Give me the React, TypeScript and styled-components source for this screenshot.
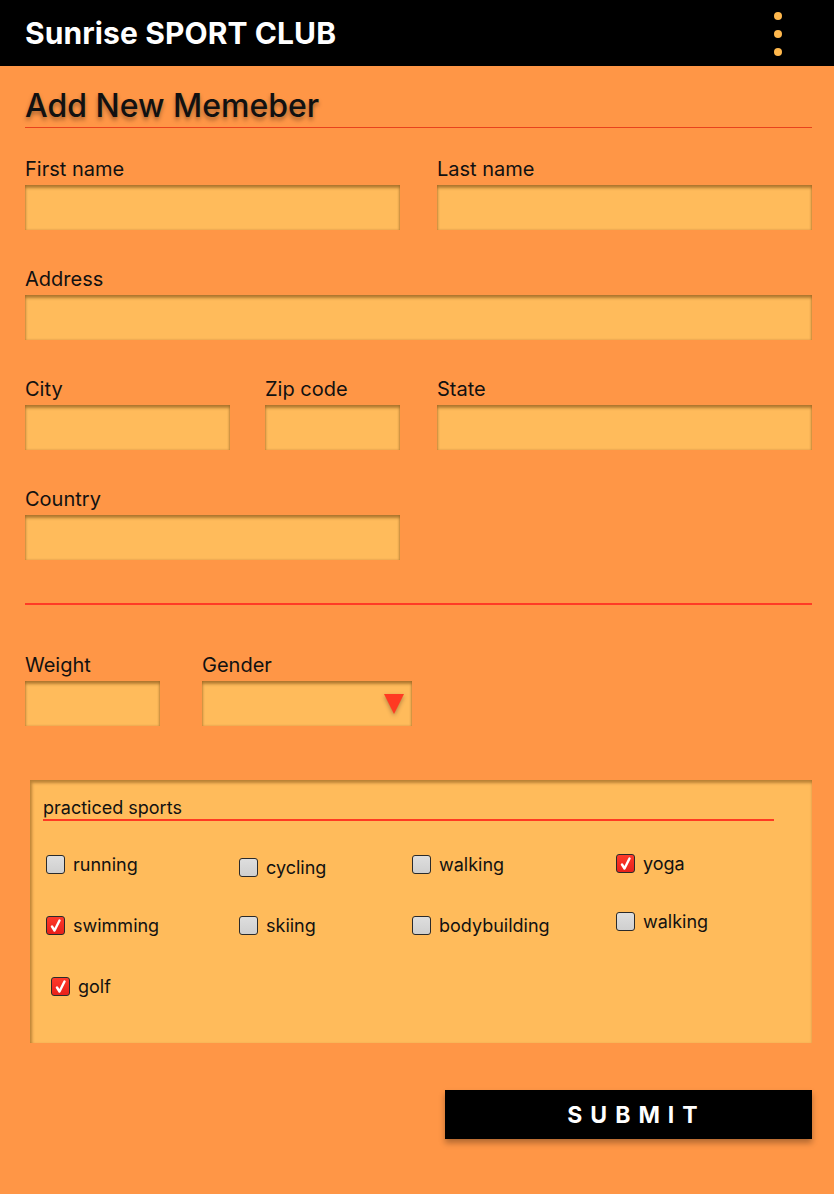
import styled, { createGlobalStyle } from 'styled-components';
import { FC } from 'react';

const GlobalStyle = createGlobalStyle`
  html, body {
    margin: 0;
    padding: 0;
    background: #ff9646;
  }
  body {
    font-family: Inter, 'Noto Sans', sans-serif;
    color: #111;
  }
  * {
    box-sizing: border-box;
  }
`;

const Page = styled.div`
  width: 834px;
  min-height: 1194px;
  background: #ff9646;
`;

const TopBar = styled.header`
  height: 66px;
  background: #000;
  display: flex;
  align-items: center;
  justify-content: space-between;
  padding: 0 52px 0 25px;
`;

const BrandTitle = styled.h1`
  margin: 0;
  color: #fff;
  font-size: 30px;
  font-weight: 700;
  letter-spacing: 0.1px;
`;

const MenuDots = styled.div`
  display: flex;
  flex-direction: column;
  gap: 10px;
  padding-top: 2px;

  span {
    width: 8px;
    height: 8px;
    border-radius: 50%;
    background: #ffb84d;
  }
`;

const Main = styled.main`
  padding: 22px 22px 40px 25px;
`;

const Heading = styled.h2`
  margin: 0 0 29px;
  padding-bottom: 3px;
  font-size: 32px;
  line-height: 36px;
  font-weight: 500;
  color: #111;
  text-shadow: 0 3px 4px rgba(0, 0, 0, 0.35);
  border-bottom: 1px solid #e8421c;
`;

const Row = styled.div<{ $columns: string }>`
  display: grid;
  grid-template-columns: ${({ $columns }) => $columns};
  margin-bottom: 37px;
`;

const Field = styled.label`
  display: flex;
  flex-direction: column;
`;

const FieldLabel = styled.span`
  font-size: 20px;
  line-height: 24px;
  margin-bottom: 4px;
  color: #111;
`;

const TextInput = styled.input`
  height: 45px;
  width: 100%;
  border: none;
  outline: none;
  background: #ffbb5b;
  box-shadow: inset 0 3px 3px rgba(90, 50, 0, 0.45),
    inset 1px 0 2px rgba(90, 50, 0, 0.15), inset -1px 0 2px rgba(90, 50, 0, 0.15);
  font-family: inherit;
  font-size: 17px;
  padding: 0 10px;
`;

const SelectBox = styled.div`
  height: 45px;
  background: #ffbb5b;
  box-shadow: inset 0 3px 3px rgba(90, 50, 0, 0.45),
    inset 1px 0 2px rgba(90, 50, 0, 0.15), inset -1px 0 2px rgba(90, 50, 0, 0.15);
  display: flex;
  align-items: center;
  justify-content: flex-end;
  padding-right: 8px;
`;

const DropArrow = styled.span`
  width: 0;
  height: 0;
  border-left: 10px solid transparent;
  border-right: 10px solid transparent;
  border-top: 20px solid #ff3a22;
  margin-top: 1px;
  filter: drop-shadow(0 2px 2px rgba(0, 0, 0, 0.3));
`;

const Divider = styled.hr`
  margin: 43px 0 48px;
  border: none;
  height: 2px;
  background: #ff3b26;
`;

const SportsPanel = styled.fieldset`
  margin: 54px 0 47px 5px;
  padding: 18px 38px 0 13px;
  height: 263px;
  border: none;
  background: #ffbb5b;
  box-shadow: inset 2px 3px 3px rgba(90, 50, 0, 0.4),
    inset -1px 0 2px rgba(90, 50, 0, 0.12);
`;

const PanelTitle = styled.div`
  font-size: 18px;
  line-height: 20px;
  padding-bottom: 1px;
  border-bottom: 2px solid #ff3a22;
  color: #111;
`;

const SportsGrid = styled.div`
  display: grid;
  grid-template-columns: 193px 173px 204px auto;
  grid-auto-rows: 19px;
  row-gap: 42px;
  padding: 34px 0 0 3px;
`;

const SportItem = styled.label<{ $dx?: number; $dy?: number }>`
  display: flex;
  align-items: center;
  gap: 8px;
  height: 19px;
  font-size: 18px;
  color: #111;
  margin-left: ${({ $dx }) => $dx ?? 0}px;
  margin-top: ${({ $dy }) => $dy ?? 0}px;
`;

const Box = styled.span<{ $checked: boolean }>`
  width: 19px;
  height: 19px;
  flex: none;
  border-radius: 3px;
  border: 1px solid #2a2a2a;
  display: flex;
  align-items: center;
  justify-content: center;
  background: ${({ $checked }) =>
    $checked
      ? 'linear-gradient(#ff3a2a, #e8201a)'
      : 'linear-gradient(#dedede, #cfcfcf)'};
`;

const SubmitRow = styled.div`
  display: flex;
  justify-content: flex-end;
`;

const SubmitButton = styled.button`
  width: 367px;
  height: 49px;
  border: none;
  background: #000;
  color: #fff;
  font-family: Inter, sans-serif;
  font-size: 23px;
  font-weight: 700;
  letter-spacing: 8px;
  padding-left: 22px;
  box-shadow: 0 4px 6px rgba(0, 0, 0, 0.3);
  cursor: pointer;
`;

const CheckMark: FC = () => (
  <svg width='14' height='14' viewBox='0 0 14 14'>
    <path
      d='M3 7.5 L5.5 11.5 L10.5 1.5'
      fill='none'
      stroke='#fff'
      strokeWidth='2.4'
      strokeLinecap='round'
      strokeLinejoin='round'
    />
  </svg>
);

const Sport: FC<{ name: string; checked?: boolean; dx?: number; dy?: number }> = ({
  name,
  checked = false,
  dx,
  dy,
}) => (
  <SportItem $dx={dx} $dy={dy}>
    <Box $checked={checked}>{checked && <CheckMark />}</Box>
    <span>{name}</span>
  </SportItem>
);

const TextField: FC<{ label: string }> = ({ label }) => (
  <Field>
    <FieldLabel>{label}</FieldLabel>
    <TextInput type='text' />
  </Field>
);

export default function App() {
  return (
    <Page>
      <GlobalStyle />
      <TopBar>
        <BrandTitle>Sunrise SPORT CLUB</BrandTitle>
        <MenuDots>
          <span />
          <span />
          <span />
        </MenuDots>
      </TopBar>
      <Main>
        <Heading>Add New Memeber</Heading>

        <Row $columns='375px 37px 375px'>
          <TextField label='First name' />
          <span />
          <TextField label='Last name' />
        </Row>

        <Row $columns='787px'>
          <TextField label='Address' />
        </Row>

        <Row $columns='205px 35px 135px 37px 375px'>
          <TextField label='City' />
          <span />
          <TextField label='Zip code' />
          <span />
          <TextField label='State' />
        </Row>

        <Row $columns='375px'>
          <TextField label='Country' />
        </Row>

        <Divider />

        <Row $columns='135px 42px 210px'>
          <TextField label='Weight' />
          <span />
          <Field>
            <FieldLabel>Gender</FieldLabel>
            <SelectBox>
              <DropArrow />
            </SelectBox>
          </Field>
        </Row>

        <SportsPanel>
          <PanelTitle>practiced sports</PanelTitle>
          <SportsGrid>
            <Sport name='running' />
            <Sport name='cycling' dy={3} />
            <Sport name='walking' />
            <Sport name='yoga' checked dy={-1} />
            <Sport name='swimming' checked />
            <Sport name='skiing' />
            <Sport name='bodybuilding' />
            <Sport name='walking' dy={-4} />
            <Sport name='golf' checked dx={5} />
          </SportsGrid>
        </SportsPanel>

        <SubmitRow>
          <SubmitButton type='button'>SUBMIT</SubmitButton>
        </SubmitRow>
      </Main>
    </Page>
  );
}
